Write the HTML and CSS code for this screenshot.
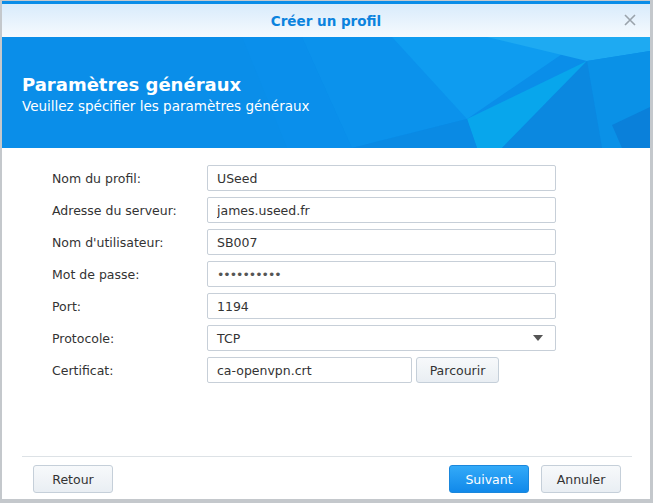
FILE: index.html
```html
<!DOCTYPE html>
<html lang="fr">
<head>
    <meta charset="UTF-8">
    <title>Créer un profil</title>
    <link rel="stylesheet" href="styles.css">
</head>
<body>
    <div class="window">
        <div class="titlebar">
            <span class="title">Créer un profil</span>
            <span class="close">
                <svg width="12" height="12" viewBox="0 0 12 12"><path d="M1 1L11 11M11 1L1 11" stroke="#9aa3ab" stroke-width="1.6" fill="none"/></svg>
            </span>
        </div>
        <div class="banner">
            <svg class="banner-art" width="648" height="111" viewBox="0 0 648 111" preserveAspectRatio="none">
                <polygon points="240,0 300,0 350,111 285,111" fill="#0b92ee" opacity="0.4"/>
                <polygon points="300,0 480,0 465,82 350,111" fill="#0c95ef" opacity="0.5"/>
                <polygon points="390,0 585,0 465,82" fill="#0e9cf0"/>
                <polygon points="485,0 648,0 648,14 585,24" fill="#1eaaf2"/>
                <polygon points="585,24 648,14 648,111 600,111" fill="#0a91e7"/>
                <polygon points="465,82 585,24 500,111 475,111" fill="#08a6ec"/>
                <polygon points="585,24 600,111 500,111" fill="#0b88e0"/>
                <polygon points="350,111 465,82 475,111" fill="#0a8ae4"/>
                <polygon points="610,88 648,70 648,111 620,111" fill="#0a80da"/>
            </svg>
            <h1>Paramètres généraux</h1>
            <p>Veuillez spécifier les paramètres généraux</p>
        </div>
        <div class="form">
            <div class="row">
                <label>Nom du profil:</label>
                <input type="text" class="field" value="USeed">
            </div>
            <div class="row">
                <label>Adresse du serveur:</label>
                <input type="text" class="field" value="james.useed.fr">
            </div>
            <div class="row">
                <label>Nom d'utilisateur:</label>
                <input type="text" class="field" value="SB007">
            </div>
            <div class="row">
                <label>Mot de passe:</label>
                <input type="text" class="field dots" value="••••••••••">
            </div>
            <div class="row">
                <label>Port:</label>
                <input type="text" class="field" value="1194">
            </div>
            <div class="row">
                <label>Protocole:</label>
                <div class="field select">
                    <span>TCP</span>
                    <span class="arrow"></span>
                </div>
            </div>
            <div class="row">
                <label>Certificat:</label>
                <input type="text" class="field short" value="ca-openvpn.crt">
                <button class="btn browse">Parcourir</button>
            </div>
        </div>
        <div class="footer">
            <button class="btn">Retour</button>
            <div class="spacer"></div>
            <button class="btn primary">Suivant</button>
            <button class="btn">Annuler</button>
        </div>
    </div>
</body>
</html>
```

FILE: styles.css
```css
body {
    margin: 0;
    background: #c4c8cc;
    font-family: "DejaVu Sans", Verdana, sans-serif;
    font-size: 12.5px;
    color: #333;
}
.window {
    margin: 1px 0 0 2px;
    width: 648px;
    height: 498px;
    background: #fff;
    border-top: 3px solid #0a8de8;
    box-sizing: border-box;
    display: flex;
    flex-direction: column;
    overflow: hidden;
}
.titlebar {
    height: 33px;
    flex: none;
    background: linear-gradient(#d8ebfb, #f6fafe);
    display: flex;
    align-items: center;
    justify-content: center;
    position: relative;
}
.title {
    font-weight: bold;
    font-size: 13.5px;
    color: #0b83de;
}
.close {
    position: absolute;
    right: 14px;
    top: 10px;
}
.banner {
    height: 111px;
    flex: none;
    background: #0a8ee9;
    position: relative;
    padding: 36px 0 0 20px;
    box-sizing: border-box;
    color: #fff;
}
.banner-art {
    position: absolute;
    left: 0;
    top: 0;
}
.banner h1 {
    position: relative;
    margin: 0;
    font-size: 18px;
    line-height: 24px;
}
.banner p {
    position: relative;
    margin: 0;
    font-size: 13.5px;
    line-height: 18px;
}
.form {
    padding: 17px 0 0 50px;
    display: flex;
    flex-direction: column;
    gap: 6px;
    flex: 1;
}
.row {
    display: flex;
    align-items: center;
    height: 26px;
}
.row label {
    width: 155px;
    flex: none;
}
.field {
    width: 349px;
    height: 26px;
    box-sizing: border-box;
    border: 1px solid #c7cfd8;
    border-radius: 2px;
    padding: 0 9px;
    font-family: inherit;
    font-size: 12.5px;
    color: #333;
    outline: none;
    margin: 0;
}
.field.dots {
    color: #555;
    letter-spacing: -1px;
}
.field.short {
    width: 205px;
}
.select {
    display: flex;
    align-items: center;
    justify-content: space-between;
    padding-right: 12px;
}
.arrow {
    width: 0;
    height: 0;
    border-left: 5px solid transparent;
    border-right: 5px solid transparent;
    border-top: 6px solid #555;
}
.btn {
    width: 80px;
    height: 28px;
    border: 1px solid #c5cfd9;
    border-radius: 3px;
    background: linear-gradient(#f7f9fb, #e9eef3);
    font-family: inherit;
    font-size: 12.5px;
    color: #333;
    padding: 0;
}
.btn.browse {
    width: 83px;
    height: 26px;
    margin-left: 4px;
}
.btn.primary {
    background: linear-gradient(#33aaf8, #1189ea);
    border-color: #1a87dc;
    color: #fff;
    margin-right: 12px;
}
.footer {
    margin: 0 18px 6px 20px;
    padding: 8px 11px 0 11px;
    border-top: 1px solid #dde2e6;
    display: flex;
    height: 28px;
    flex: none;
}
.spacer {
    flex: 1;
}
```
